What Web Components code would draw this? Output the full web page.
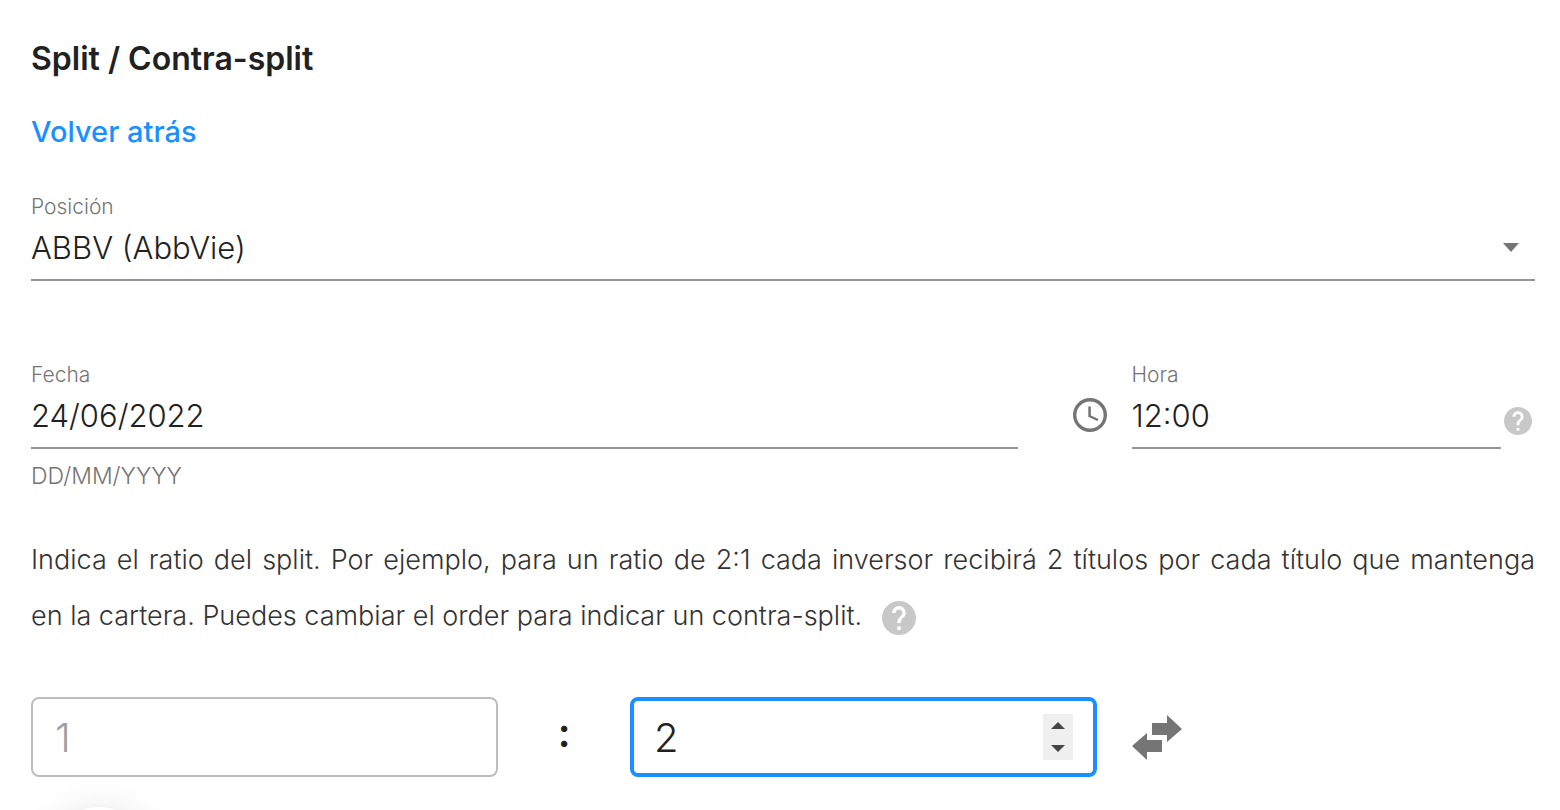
<!DOCTYPE html>
<html lang="es">
<head>
<meta charset="utf-8">
<meta name="viewport" content="width=device-width, initial-scale=1">
<title>Split / Contra-split</title>
<style>
    body {
        margin: 0;
        background: #fff;
        color: #212121;
        font-family: Inter, "Liberation Sans", sans-serif;
        font-weight: 300;
        --primary: #1890ff;
        --muted: #757575;
        --line: #949494;
        --disabled: #bdbdbd;
    }
</style>
</head>
<body>
<split-page></split-page>
<script>
class HelpIcon extends HTMLElement {
    constructor() {
        super();
        this.root = this.attachShadow({ mode: "open" });
    }
    connectedCallback() {
        this.root.innerHTML = `
        <style>
            :host { display: inline-block; width: 34px; height: 34px; color: #c8c8c8; }
            :host([small]) { width: 28px; height: 28px; }
            svg { display: block; width: 100%; height: 100%; }
        </style>
        <svg viewBox="2 2 20 20" fill="currentColor" aria-hidden="true">
            <path d="M12 2C6.48 2 2 6.48 2 12s4.480 10 10 10 10-4.480 10-10S17.520 2 12 2zm1 17h-2v-2h2v2zm2.070-7.750l-.9.920C13.450 12.900 13 13.500 13 15h-2v-.5c0-1.100.450-2.100 1.170-2.830l1.240-1.260c.370-.360.590-.860.590-1.410 0-1.100-.9-2-2-2s-2 .9-2 2H8c0-2.210 1.790-4 4-4s4 1.790 4 4c0 .880-.360 1.680-.930 2.250z"/>
        </svg>`;
    }
}
customElements.define("help-icon", HelpIcon);

const fieldStyles = `
    :host { display: block; min-width: 0; }
    label { display: block; font-size: 21px; line-height: 24px; color: var(--muted); }
    .control { display: flex; align-items: center; padding: 8px 0 11px; border-bottom: 2px solid var(--line); }
    input, select {
        flex: 1; min-width: 0; height: 41px; margin: 0; padding: 0; border: 0; outline: 0;
        background: none; appearance: none; color: inherit; font: inherit; font-size: 31px;
    }
    .hint { font-size: 23px; line-height: 32px; padding-top: 11px; color: var(--muted); }
`;

class TextField extends HTMLElement {
    constructor() {
        super();
        this.root = this.attachShadow({ mode: "open" });
    }
    connectedCallback() {
        const hint = this.getAttribute("hint");
        this.root.innerHTML = `
        <style>${fieldStyles}</style>
        <label for="field">${this.getAttribute("label")}</label>
        <div class="control">
            <input id="field" type="text" value="${this.getAttribute("value")}">
        </div>
        ${hint ? `<div class="hint">${hint}</div>` : ""}`;
    }
}
customElements.define("text-field", TextField);

class SelectField extends HTMLElement {
    constructor() {
        super();
        this.root = this.attachShadow({ mode: "open" });
    }
    connectedCallback() {
        this.root.innerHTML = `
        <style>
            ${fieldStyles}
            .control { padding-right: 16px; }
            svg { width: 16px; height: 9px; fill: var(--muted); }
        </style>
        <label for="field">${this.getAttribute("label")}</label>
        <div class="control">
            <select id="field"><option>${this.getAttribute("value")}</option></select>
            <svg viewBox="0 0 16 9" aria-hidden="true"><path d="M0 0h16L8 9z"/></svg>
        </div>`;
    }
}
customElements.define("select-field", SelectField);

class RatioInput extends HTMLElement {
    constructor() {
        super();
        this.root = this.attachShadow({ mode: "open" });
    }
    connectedCallback() {
        const disabled = this.hasAttribute("disabled");
        this.root.innerHTML = `
        <style>
            :host { display: block; min-width: 0; }
            .box {
                display: flex; align-items: center; box-sizing: border-box; height: 80px;
                padding: 0 22px; border: 2px solid var(--disabled); border-radius: 8px;
            }
            :host([active]) .box { padding: 0 20px; border: 4px solid var(--primary); }
            input {
                flex: 1; min-width: 0; height: 48px; margin: 0; padding: 0; border: 0; outline: 0;
                background: none; appearance: textfield; color: inherit; font: inherit; font-size: 40px;
            }
            input:disabled { color: #9e9e9e; }
            input::-webkit-inner-spin-button { appearance: none; margin: 0; }
            .stepper { display: grid; width: 30px; height: 46px; background: #efefef; }
            .stepper button { display: grid; place-items: center; padding: 0; border: 0; background: none; }
            .stepper svg { width: 14px; height: 7px; fill: #464646; }
        </style>
        <div class="box">
            <input type="number" value="${this.getAttribute("value")}" aria-label="${this.getAttribute("label")}" ${disabled ? "disabled" : ""}>
            ${disabled ? "" : `
            <div class="stepper">
                <button type="button" aria-label="Aumentar"><svg viewBox="0 0 14 7"><path d="M0 7h14L7 0z"/></svg></button>
                <button type="button" aria-label="Reducir"><svg viewBox="0 0 14 7"><path d="M0 0h14L7 7z"/></svg></button>
            </div>`}
        </div>`;
        const input = this.root.querySelector("input");
        const [up, down] = this.root.querySelectorAll("button");
        if (up) {
            up.addEventListener("click", () => input.stepUp());
            down.addEventListener("click", () => input.stepDown());
        }
    }
}
customElements.define("ratio-input", RatioInput);

class FloatingButton extends HTMLElement {
    constructor() {
        super();
        this.root = this.attachShadow({ mode: "open" });
    }
    connectedCallback() {
        // parked just under the lower edge of the window
        this.root.innerHTML = `
        <style>
            :host { position: fixed; left: 43px; bottom: -109px; }
            button {
                display: block; width: 112px; height: 112px; border: 0; border-radius: 50%; background: #fff;
                box-shadow: 0 6px 10px -2px rgba(0,0,0,.2), 0 12px 20px rgba(0,0,0,.14), 0 2px 36px rgba(0,0,0,.1);
            }
        </style>
        <button type="button" aria-label="Ayuda"></button>`;
    }
}
customElements.define("floating-button", FloatingButton);

class SplitPage extends HTMLElement {
    constructor() {
        super();
        this.root = this.attachShadow({ mode: "open" });
    }
    connectedCallback() {
        this.root.innerHTML = `
        <style>
            :host { display: block; padding: 39px 25px 32px 31px; }
            h1 { margin: 0; font-size: 32px; line-height: 40px; font-weight: 600; }
            a { display: inline-block; margin: 33px 0 43px; font-size: 29px; line-height: 40px; font-weight: 500; color: var(--primary); text-decoration: none; }
            .when { display: grid; grid-template-columns: minmax(0, 32fr) minmax(0, 15fr); gap: 55px; margin-top: 82px; }
            .time { display: flex; align-items: flex-start; }
            .time text-field { flex: 1; }
            .clock { flex: none; width: 34px; height: 34px; margin: 35px 25px 0 0; fill: var(--muted); }
            .time help-icon { flex: none; margin: 44px 3px 0; }
            p { margin: 40px 0 53px; font-size: 27px; line-height: 56px; text-align: justify; color: #333; }
            p help-icon { margin-left: 12px; vertical-align: middle; }
            .ratio { display: grid; grid-template-columns: 16fr 132px 16fr 15fr; align-items: center; }
            .colon { padding-bottom: 8px; text-align: center; font-size: 40px; line-height: 48px; font-weight: 600; }
            .swap { justify-self: start; margin-left: 35px; padding: 0; border: 0; background: none; color: var(--muted); }
            .swap svg { display: block; width: 50px; height: 45px; fill: currentColor; }
        </style>
        <h1>Split / Contra-split</h1>
        <a href="#">Volver atrás</a>
        <select-field label="Posición" value="ABBV (AbbVie)"></select-field>
        <div class="when">
            <text-field label="Fecha" value="24/06/2022" hint="DD/MM/YYYY"></text-field>
            <div class="time">
                <svg class="clock" viewBox="2 2 20 20" aria-hidden="true">
                    <path d="M12 2a10 10 0 1 0 0 20 10 10 0 0 0 0-20zm0 18a8 8 0 1 1 0-16 8 8 0 0 1 0 16zM12.500 7H11v6l5.250 2.600.750-1.230-4.500-2.120z"/>
                </svg>
                <text-field label="Hora" value="12:00"></text-field>
                <help-icon small></help-icon>
            </div>
        </div>
        <p>Indica el ratio del split. Por ejemplo, para un ratio de 2:1 cada inversor recibirá 2 títulos por cada título que mantenga en&nbsp;la&nbsp;cartera. Puedes cambiar el order para indicar un contra-split. <help-icon></help-icon></p>
        <div class="ratio">
            <ratio-input label="Títulos actuales" value="1" disabled></ratio-input>
            <span class="colon">:</span>
            <ratio-input label="Títulos nuevos" value="2" active></ratio-input>
            <button class="swap" type="button" aria-label="Invertir el ratio">
                <svg viewBox="0 0 50 45"><path d="M20 8h15V0l15 14-15 13v-7H20zM30 25v12H15v8L0 31l15-13v7z"/></svg>
            </button>
        </div>
        <floating-button></floating-button>`;
    }
}
customElements.define("split-page", SplitPage);
</script>
</body>
</html>
